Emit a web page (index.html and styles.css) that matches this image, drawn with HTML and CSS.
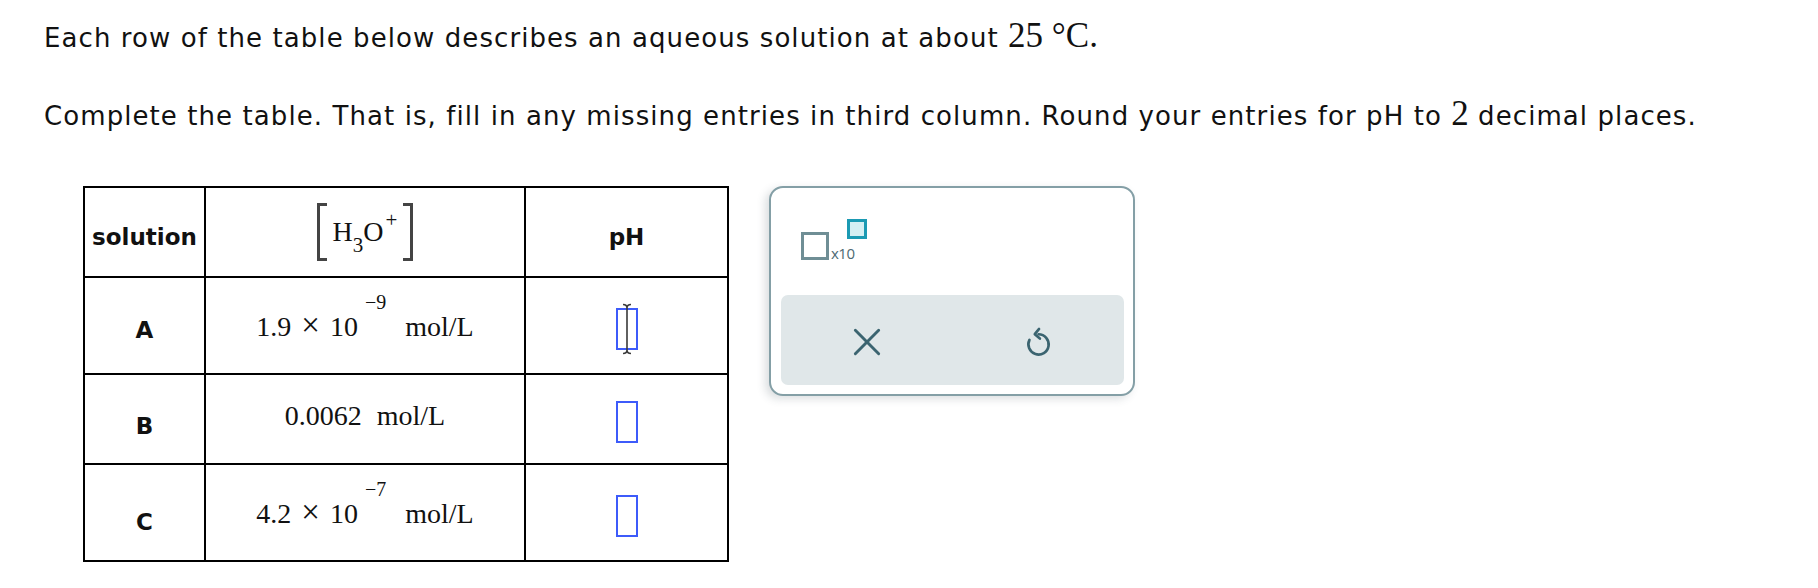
FILE: index.html
```html
<!DOCTYPE html>
<html>
<head>
<meta charset="utf-8">
<link rel="stylesheet" href="styles.css">
</head>
<body>
<div class="page">
  <p class="line line1">Each row of the table below describes an aqueous solution at about <span class="m">25 °C.</span></p>
  <p class="line line2">Complete the table. That is, fill in any missing entries in third column. Round your entries for pH to <span class="m">2</span> decimal places.</p>
  <div class="work">
    <table class="tbl">
      <colgroup><col class="c1"><col class="c2"><col class="c3"></colgroup>
      <tr class="r-head">
        <th class="lbl lbl-h">solution</th>
        <th>
          <span class="conc">
            <span class="brk brk-l"></span>
            <span class="m formula">H<sub>3</sub>O<sup>+</sup></span>
            <span class="brk brk-r"></span>
          </span>
        </th>
        <th class="lbl lbl-h">pH</th>
      </tr>
      <tr class="r-tall">
        <th class="lbl lbl-a">A</th>
        <td><span class="m val">1.9 <span class="x">×</span> 10<sup>−9</sup> <span class="u">mol/L</span></span></td>
        <td>
          <span class="inp-wrap">
            <span class="inp"></span>
            <svg class="ibeam" width="12" height="52" viewBox="0 0 12 52"><path d="M2 1.5 Q6 1.5 6 5 Q6 1.5 10 1.5 M6 5 V47 M2 50.5 Q6 50.5 6 47 Q6 50.5 10 50.5" fill="none" stroke="#3a3a3a" stroke-width="1.6"/></svg>
          </span>
        </td>
      </tr>
      <tr class="r-short">
        <th class="lbl lbl-b">B</th>
        <td><span class="m val">0.0062 <span class="u u-b">mol/L</span></span></td>
        <td><span class="inp-wrap"><span class="inp"></span></span></td>
      </tr>
      <tr class="r-tall">
        <th class="lbl lbl-c">C</th>
        <td><span class="m val">4.2 <span class="x">×</span> 10<sup>−7</sup> <span class="u">mol/L</span></span></td>
        <td><span class="inp-wrap"><span class="inp"></span></span></td>
      </tr>
    </table>

    <div class="card">
      <div class="card-top">
        <span class="sci">
          <span class="box-base"></span>
          <span class="x10">x10</span>
          <span class="box-exp"></span>
        </span>
      </div>
      <div class="actions">
        <button class="act" aria-label="clear">
          <svg width="28" height="28" viewBox="0 0 24 24"><path d="M2 2 L22 22 M22 2 L2 22" stroke="#3b6470" stroke-width="2.5" stroke-linecap="round" fill="none"/></svg>
        </button>
        <button class="act" aria-label="undo">
          <svg width="32" height="32" viewBox="0 0 24 24"><path d="M5.6 10.4 A7.6 7.6 0 1 0 12.4 6.2" stroke="#3b6470" stroke-width="2" stroke-linecap="round" fill="none"/><path d="M12.8 2.2 L9.6 6.1 L13.4 9.4" stroke="#3b6470" stroke-width="2" stroke-linecap="round" stroke-linejoin="round" fill="none"/></svg>
        </button>
      </div>
    </div>
  </div>
</div>
</body>
</html>
```

FILE: styles.css
```css
* { box-sizing: border-box; }
html, body { margin: 0; padding: 0; background: #fff; }
body {
  font-family: "DejaVu Sans", Verdana, sans-serif;
  color: #111;
}
.page {
  padding: 21px 0 0 44px;
}
.line {
  margin: 0;
  font-size: 26px;
  letter-spacing: 1.08px;
  line-height: 34px;
}
.line2 { margin-top: 44px; }
.line .m {
  font-size: 35px;
  letter-spacing: 0;
  line-height: 0;
}
.m {
  font-family: "Liberation Serif", "Times New Roman", serif;
  font-size: 28px;
}
.work {
  display: flex;
  align-items: flex-start;
  margin-top: 53px;
  margin-left: 39px;
  gap: 40px;
}
.tbl {
  border-collapse: collapse;
  width: 644px;
  table-layout: fixed;
}
.tbl .c1 { width: 121px; }
.tbl .c2 { width: 320px; }
.tbl .c3 { width: 203px; }
.tbl th, .tbl td {
  border: 2px solid #000;
  padding: 0;
  text-align: center;
  vertical-align: middle;
}
.tbl th {
  font-weight: bold;
  font-size: 23px;
  color: #111;
}
.tbl th.lbl-h { padding-top: 10px; }
.tbl th.lbl-a { padding-top: 9px; }
.tbl th.lbl-b { padding-top: 14px; }
.tbl th.lbl-c { padding-top: 18px; }
.r-head { height: 90px; }
.r-tall { height: 97px; }
.r-short { height: 90px; }

.conc {
  display: inline-flex;
  align-items: center;
  gap: 4px;
  vertical-align: middle;
}
.brk {
  display: inline-block;
  width: 10px;
  height: 58px;
  border: 3px solid #444;
}
.brk-l { border-right: none; }
.brk-r { border-left: none; }
.formula {
  font-weight: normal;
  color: #111;
  padding: 0 2px;
}
.formula sub {
  font-size: 21px;
  vertical-align: -11px;
  line-height: 0;
}
.formula sup {
  font-size: 21px;
  vertical-align: 14px;
  line-height: 0;
  margin-left: 2px;
}
.val {
  color: #111;
  position: relative;
  top: -3px;
}
.val .x {
  font-size: 33px;
  margin: 0 3px;
  line-height: 0;
}
.val sup {
  font-size: 20px;
  vertical-align: 27px;
  line-height: 0;
  margin-left: 7px;
}
.val .u { margin-left: 12px; }
.val .u-b { margin-left: 8px; }

.inp-wrap {
  display: inline-block;
  position: relative;
  vertical-align: middle;
  margin-top: 6px;
}
.inp {
  display: block;
  width: 22px;
  height: 42px;
  border: 2px solid #3d5bfa;
  background: #fff;
}
.ibeam {
  position: absolute;
  left: 5px;
  top: -5px;
}

.card {
  width: 366px;
  height: 210px;
  border: 2px solid #849fa6;
  border-radius: 14px;
  background: #fff;
  box-shadow: -4px 3px 8px rgba(60, 80, 90, 0.18);
  padding: 0 9px 9px 10px;
  display: flex;
  flex-direction: column;
}
.card-top {
  height: 107px;
  padding: 31px 0 0 20px;
}
.sci {
  display: inline-flex;
  align-items: flex-start;
  position: relative;
}
.box-base {
  display: block;
  width: 28px;
  height: 28px;
  border: 3px solid #6f8e95;
  margin-top: 13px;
}
.x10 {
  font-family: "Open Sans", "DejaVu Sans", sans-serif;
  font-size: 15px;
  color: #4d6a72;
  margin-top: 24px;
  margin-left: 2px;
  letter-spacing: -0.5px;
}
.box-exp {
  display: block;
  width: 20px;
  height: 20px;
  border: 3px solid #1b9ab3;
  background: #d4eff3;
  margin-left: -8px;
}
.actions {
  flex: 1;
  background: #e0e7e9;
  border-radius: 7px;
  display: flex;
  justify-content: space-around;
  align-items: center;
}
.act {
  border: none;
  background: transparent;
  padding: 0;
  width: 60px;
  height: 40px;
  display: flex;
  align-items: center;
  justify-content: center;
  margin-top: 4px;
}
```
